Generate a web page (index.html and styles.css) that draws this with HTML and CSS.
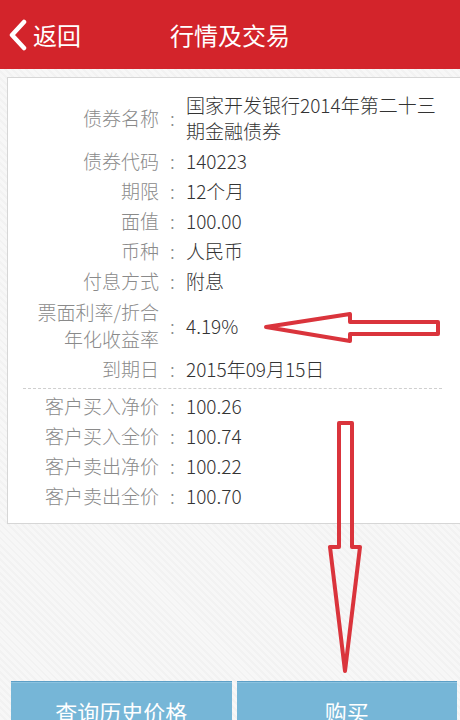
FILE: index.html
```html
<!DOCTYPE html>
<html lang="zh-CN">
<head>
<meta charset="UTF-8">
<meta name="viewport" content="width=device-width, initial-scale=1.0">
<title>行情及交易</title>
<link rel="stylesheet" href="styles.css">
</head>
<body>

<div class="header">
  <div class="back">
    <svg class="chevron" width="19" height="32" viewBox="0 0 19 32">
      <path d="M16 3 L4 16 L16 29" fill="none" stroke="#fff" stroke-width="4.5" stroke-linecap="round" stroke-linejoin="round"/>
    </svg>
    <span>返回</span>
  </div>
  <div class="title">行情及交易</div>
</div>

<div class="card">
  <div class="row"><div class="label">债券名称</div><div class="colon">:</div><div class="value">国家开发银行2014年第二十三期金融债券</div></div>
  <div class="row"><div class="label">债券代码</div><div class="colon">:</div><div class="value">140223</div></div>
  <div class="row"><div class="label">期限</div><div class="colon">:</div><div class="value">12个月</div></div>
  <div class="row"><div class="label">面值</div><div class="colon">:</div><div class="value">100.00</div></div>
  <div class="row"><div class="label">币种</div><div class="colon">:</div><div class="value">人民币</div></div>
  <div class="row"><div class="label">付息方式</div><div class="colon">:</div><div class="value">附息</div></div>
  <div class="row tall"><div class="label">票面利率/折合<br>年化收益率</div><div class="colon">:</div><div class="value">4.19%</div></div>
  <div class="row"><div class="label">到期日</div><div class="colon">:</div><div class="value">2015年09月15日</div></div>
  <div class="divider"></div>
  <div class="row"><div class="label">客户买入净价</div><div class="colon">:</div><div class="value">100.26</div></div>
  <div class="row"><div class="label">客户买入全价</div><div class="colon">:</div><div class="value">100.74</div></div>
  <div class="row"><div class="label">客户卖出净价</div><div class="colon">:</div><div class="value">100.22</div></div>
  <div class="row"><div class="label">客户卖出全价</div><div class="colon">:</div><div class="value">100.70</div></div>
</div>

<div class="actions">
  <button class="btn">查询历史价格</button>
  <button class="btn">购买</button>
</div>

<!-- red annotation arrows drawn over the page -->
<svg class="marks" width="460" height="720" viewBox="0 0 460 720">
  <path d="M266 327 L350 314 L350 322 L438 322 L438 334 L350 334 L350 341 Z" fill="none" stroke="#da343c" stroke-width="4" stroke-linejoin="round"/>
  <path d="M339 423 L352 423 L352 547 L360 547 L345 671 L330 547 L339 547 Z" fill="none" stroke="#da343c" stroke-width="4" stroke-linejoin="round"/>
</svg>

</body>
</html>
```

FILE: styles.css
```css
body {
  margin: 0;
  font-family: "Noto Sans CJK SC", "Noto Sans", sans-serif;
  font-weight: 300;
  background-color: #f5f5f5;
  background-image: repeating-linear-gradient(45deg, #f7f7f7 0, #f7f7f7 3px, #f2f2f2 3px, #f2f2f2 5px);
  height: 720px;
  overflow: hidden;
}
.header {
  height: 69px;
  background: #d3242b;
  color: #fff;
  display: flex;
  align-items: center;
  position: relative;
  font-weight: 400;
}
.back {
  display: flex;
  align-items: center;
  padding-left: 8px;
  font-size: 24px;
  gap: 6px;
}
.chevron {
  display: block;
}
.title {
  position: absolute;
  left: 0;
  right: 0;
  text-align: center;
  font-size: 24px;
  pointer-events: none;
}
.card {
  margin: 8px 0 0 7px;
  background: #fff;
  border: 1px solid #d6d6d6;
  border-right: none;
  padding: 12px 18px 14px 15px;
  height: 447px;
  box-sizing: border-box;
}
.row {
  display: grid;
  grid-template-columns: 136px 27px 1fr;
  align-items: center;
  font-size: 19px;
  line-height: 26px;
  padding: 2px 0;
}
.row.tall {
  line-height: 27px;
}
.label {
  text-align: right;
  color: #8a8a8a;
}
.colon {
  text-align: center;
  color: #8a8a8a;
}
.value {
  color: #333;
}
.divider {
  border-top: 1px dashed #cfcfcf;
  margin: 4px 0 2px;
}
.actions {
  display: flex;
  gap: 5px;
  margin: 157px 3px 0 11px;
}
.btn {
  flex: 1;
  height: 52px;
  border: none;
  border-top: 1px solid #5c9fc6;
  background: #76b6d7;
  color: #fff;
  font-family: inherit;
  font-weight: 400;
  font-size: 22px;
  padding: 0;
  line-height: 58px;
  box-shadow: inset 0 1px 0 #8dc3df;
}
.marks {
  position: absolute;
  left: 0;
  top: 0;
  pointer-events: none;
}
```
